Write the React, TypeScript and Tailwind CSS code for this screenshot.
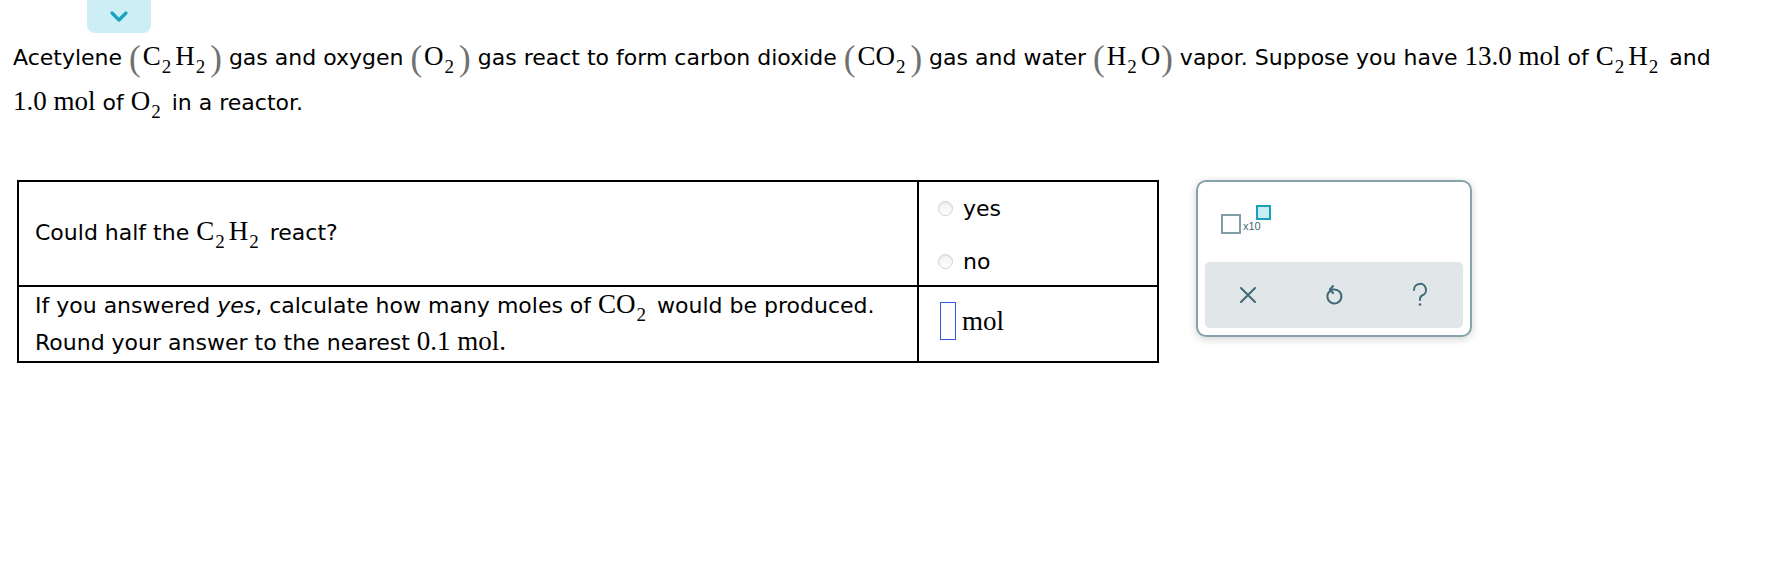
import React from "react";

const M = ({ children }: { children: React.ReactNode }) => (
  <span className="font-['Liberation_Serif',serif] text-[27px] leading-none">{children}</span>
);
const Sub = ({ children }: { children: React.ReactNode }) => (
  <span className="font-['Liberation_Serif',serif] text-[19px] leading-none align-[-8px] ml-[1px] mr-[4px]">{children}</span>
);
const L = () => (
  <span className="font-['Liberation_Serif',serif] text-[35px] leading-none text-[#707070] align-[-5px] mr-[2px]">(</span>
);
const R = () => (
  <span className="font-['Liberation_Serif',serif] text-[35px] leading-none text-[#707070] align-[-5px] ml-[1px]">)</span>
);

const Radio = ({ label }: { label: string }) => (
  <div className="flex items-center gap-[10px] h-[26px]">
    <span className="w-[15px] h-[15px] rounded-full border border-[#d2d2d2] bg-gradient-to-b from-[#f0f0f0] to-white shadow-[inset_0_1px_1px_rgba(0,0,0,0.06)]" />
    <span>{label}</span>
  </div>
);

export default function App() {
  return (
    <div className="w-[1778px] h-[575px] bg-white text-black font-['DejaVu_Sans',Verdana,sans-serif] text-[22px]">
      <div className="ml-[87px] w-[64px] h-[33px] bg-[#cdeef4] rounded-b-[8px] flex items-center justify-center">
        <svg width="22" height="14" viewBox="0 0 22 14">
          <path d="M4 3 L11 10 L18 3" fill="none" stroke="#17a3c1" strokeWidth="3.2" strokeLinecap="round" strokeLinejoin="round" />
        </svg>
      </div>
      <p className="pl-[13px] mt-[2px] leading-[45px] whitespace-nowrap">
        Acetylene <L />
        <M>C</M>
        <Sub>2</Sub>
        <M>H</M>
        <Sub>2</Sub>
        <R /> gas and oxygen <L />
        <M>O</M>
        <Sub>2</Sub>
        <R /> gas react to form carbon dioxide <L />
        <M>CO</M>
        <Sub>2</Sub>
        <R /> gas and water <L />
        <M>H</M>
        <Sub>2</Sub>
        <M>O</M>
        <R /> vapor. Suppose you have <M>13.0 mol</M> of <M>C</M>
        <Sub>2</Sub>
        <M>H</M>
        <Sub>2</Sub> and
        <br />
        <M>1.0 mol</M> of <M>O</M>
        <Sub>2</Sub> in a reactor.
      </p>
      <div className="mt-[55px] ml-[17px] flex items-start gap-[37px]">
        <table className="border-collapse w-[1142px]">
          <tbody>
            <tr>
              <td className="border-2 border-black w-[900px] h-[105px] pl-[16px] align-middle">
                Could half the <M>C</M>
                <Sub>2</Sub>
                <M>H</M>
                <Sub>2</Sub> react?
              </td>
              <td className="border-2 border-black pl-[19px] align-top">
                <div className="flex flex-col gap-[27px] pt-[13px]">
                  <Radio label="yes" />
                  <Radio label="no" />
                </div>
              </td>
            </tr>
            <tr>
              <td className="border-2 border-black h-[75px] pl-[16px] p-0 align-middle leading-[37px]">
                <div>
                  If you answered <i>yes</i>, calculate how many moles of <M>CO</M>
                  <Sub>2</Sub> would be produced.
                </div>
                <div>
                  Round your answer to the nearest <M>0.1 mol.</M>
                </div>
              </td>
              <td className="border-2 border-black pl-[21px] align-top pt-[15px]">
                <div className="flex items-center gap-[6px]">
                  <span className="w-[16px] h-[38px] border-[1.5px] border-[#3355ee]" />
                  <M>mol</M>
                </div>
              </td>
            </tr>
          </tbody>
        </table>
        <div className="w-[276px] h-[157px] rounded-[10px] border-2 border-[#87a3aa] bg-white shadow-[0_2px_8px_rgba(0,0,0,0.18)] px-[7px] flex flex-col">
          <div className="h-[80px] pl-[16px] pt-[23px]">
            <div className="relative w-[52px] h-[30px]">
              <span className="absolute left-0 top-[9px] w-[20px] h-[20px] border-2 border-[#7f9ca3] bg-white" />
              <span className="absolute left-[22px] top-[16px] text-[11px] text-[#3d6a75] font-['Liberation_Sans',sans-serif] leading-none">x10</span>
              <span className="absolute left-[35px] top-0 w-[15px] h-[15px] border-2 border-[#1a9fb9] bg-[#c8eef5]" />
            </div>
          </div>
          <div className="h-[66px] bg-[#e1e7e9] rounded-[5px] grid grid-cols-3 items-center justify-items-center">
            <svg width="22" height="22" viewBox="0 0 22 22">
              <path d="M4 4 L18 18 M18 4 L4 18" stroke="#3d6a75" strokeWidth="2" strokeLinecap="round" />
            </svg>
            <svg width="24" height="24" viewBox="0 0 24 24">
              <path d="M7.5 8.5 A7 7 0 1 0 12 6.5 L8 6.5" fill="none" stroke="#3d6a75" strokeWidth="2" strokeLinecap="round" strokeLinejoin="round" />
              <path d="M11 3 L8 6.5 L11 10" fill="none" stroke="#3d6a75" strokeWidth="2" strokeLinecap="round" strokeLinejoin="round" />
            </svg>
            <svg width="22" height="26" viewBox="0 0 22 26">
              <path d="M5 8 A6 6 0 1 1 13 13.5 C11.5 14.3 11 15.2 11 17 L11 18" fill="none" stroke="#3d6a75" strokeWidth="2" strokeLinecap="round" />
              <circle cx="11" cy="22.5" r="1.3" fill="#3d6a75" />
            </svg>
          </div>
        </div>
      </div>
    </div>
  );
}
